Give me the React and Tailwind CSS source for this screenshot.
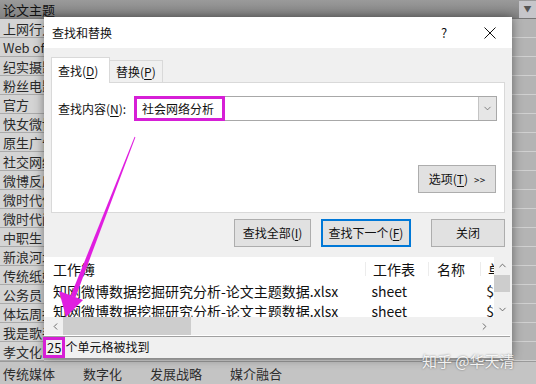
import { ChevronDown, ChevronLeft, ChevronRight, ChevronUp } from "lucide-react";

const leftCells = [
  "上网行为分析",
  "Web of Science",
  "纪实摄影作品",
  "粉丝电影研究",
  "官方",
  "快女微博",
  "原生广告",
  "社交网络分析",
  "微博反腐",
  "微时代传播",
  "微时代阅读",
  "中职生",
  "新浪河北",
  "传统纸媒",
  "公务员",
  "体坛周报",
  "我是歌手",
  "孝文化",
];

const bottomCells = [
  { text: "传统媒体", width: "w-[80px]" },
  { text: "数字化", width: "w-[67px]" },
  { text: "发展战略", width: "w-[80px]" },
  { text: "媒介融合", width: "flex-1" },
];

function Underlined({ before, letter, after = ")" }) {
  return (
    <span>
      {before}(<span className="underline underline-offset-2">{letter}</span>
      {after}
    </span>
  );
}

function DialogButton({ children, className = "" }) {
  return (
    <div
      className={`flex h-[28px] items-center justify-center bg-[#e1e1e1] text-[12px] text-[#111] ${className}`}
    >
      {children}
    </div>
  );
}

export default function App() {
  return (
    <div className="relative h-[384px] w-[536px] overflow-hidden bg-[#b8b8b8] font-['Noto_Sans_CJK_SC',sans-serif] text-[#222]">
      {/* worksheet behind the dialog */}
      <div className="flex flex-col">
        <div className="flex h-[19px] items-center bg-gradient-to-b from-[#9a9a9a] to-[#828282] border-b border-[#767676]">
          <span className="pl-[3px] text-[13px] leading-none text-[#111]">论文主题</span>
          <div className="ml-auto flex h-[17px] w-[17px] items-center justify-center bg-[#c6c6ca]">
            <span className="text-[8px] leading-none text-[#555]">▼</span>
          </div>
        </div>
        {leftCells.map((cell, i) => (
          <div key={i} className="flex h-[19px]">
            <div className="flex w-[44px] items-center overflow-hidden whitespace-nowrap border-b border-[#aaaaaa] bg-[#d4d4d4] pl-[3px] text-[13px] leading-none text-[#2a2a2a]">
              {cell}
            </div>
            <div className="flex-1 border-b border-[#d0d0d0] bg-[#b4b4b4]" />
          </div>
        ))}
        <div className="flex h-[23px] items-center border-t border-[#9a9a9a] bg-[#c4c4c4]">
          {bottomCells.map((cell) => (
            <div
              key={cell.text}
              className={`${cell.width} whitespace-nowrap pl-[3px] text-[13px] leading-none text-[#2c2c2c]`}
            >
              {cell.text}
            </div>
          ))}
        </div>
      </div>

      {/* find & replace dialog */}
      <div className="absolute left-[44px] top-[17px] flex h-[341px] w-[468px] flex-col bg-[#f0f0f0] shadow-[0_0_10px_rgba(0,0,0,0.45)]">
        <div className="flex h-[31px] shrink-0 items-center bg-white pl-[8px] pr-[16px] text-[12px] text-[#111]">
          <span>查找和替换</span>
          <span className="ml-auto w-[14px] text-center text-[13px]">?</span>
          <svg className="ml-[33px]" width="12" height="12" viewBox="0 0 12 12">
            <path d="M0.5 0.5 L11.5 11.5 M11.5 0.5 L0.5 11.5" stroke="#111" strokeWidth="1" fill="none" />
          </svg>
        </div>

        <div className="px-[7px] pt-[9px]">
          <div className="flex h-[25px] items-end text-[12px] text-[#111]">
            <div className="relative z-10 -mb-px flex h-[26px] w-[59px] items-center border border-b-0 border-[#d9d9d9] bg-white pl-[6px]">
              <Underlined before="查找" letter="D" />
            </div>
            <div className="flex h-[22px] w-[53px] items-center border border-b-0 border-l-0 border-[#d9d9d9] pl-[6px]">
              <Underlined before="替换" letter="P" />
            </div>
          </div>
          <div className="flex h-[131px] flex-col border border-[#d9d9d9] bg-white">
            <div className="mt-[13px] flex h-[25px] items-center">
              <span className="w-[82px] pl-[6px] text-[12px] text-[#111]">
                查找内容(<span className="underline underline-offset-2">N</span>):
              </span>
              <div className="mr-[7px] flex h-[25px] flex-1 border border-[#a8a8a8]">
                <span className="-m-px flex h-[25px] items-center border-[3px] border-[#d61fd6] pl-[5px] pr-[8px] text-[12px] text-[#111]">
                  社会网络分析
                </span>
                <div className="ml-auto flex w-[18px] items-center justify-center border-l border-[#c4c4c4] bg-[#e6e6e6]">
                  <ChevronDown size={11} strokeWidth={1.5} color="#555" />
                </div>
              </div>
            </div>
            <div className="mt-[44px] flex justify-end pr-[8px]">
              <DialogButton className="w-[78px] gap-[6px] border border-[#adadad]">
                <span>
                  选项(<span className="underline underline-offset-2">T</span>)
                </span>
                <span className="text-[10px]">&gt;&gt;</span>
              </DialogButton>
            </div>
          </div>
        </div>

        <div className="mt-[6px] flex justify-end gap-[10px] pr-[7px]">
          <DialogButton className="w-[77px] border border-[#adadad]">
            <Underlined before="查找全部" letter="I" />
          </DialogButton>
          <DialogButton className="w-[90px] border-2 border-[#0078d7]">
            <Underlined before="查找下一个" letter="F" />
          </DialogButton>
          <DialogButton className="ml-[10px] w-[74px] border border-[#adadad]">关闭</DialogButton>
        </div>

        {/* results list */}
        <div className="mr-[2px] mt-[10px] flex h-[80px] flex-col border-b border-[#a0a0a0] bg-white">
          <div className="flex h-[60px]">
            <div className="flex-1 overflow-hidden text-[14px] leading-none text-[#111]">
              <div className="flex h-[24px] items-center">
                <span className="w-[321px] pl-[9px]">工作簿</span>
                <span className="w-[63px] border-l border-[#ececec] pl-[7px]">工作表</span>
                <span className="w-[52px] border-l border-[#ececec] pl-[8px]">名称</span>
                <span className="flex-1 overflow-hidden border-l border-[#ececec] pl-[7px]">单</span>
              </div>
              {[0, 1].map((row) => (
                <div key={row} className="flex h-[20px] items-center whitespace-nowrap">
                  <span className="w-[321px] pl-[9px]">知网微博数据挖掘研究分析-论文主题数据.xlsx</span>
                  <span className="w-[63px] pl-[7px]">sheet</span>
                  <span className="w-[52px]" />
                  <span className="pl-[7px]">$</span>
                </div>
              ))}
            </div>
            <div className="flex w-[16px] flex-col items-center bg-[#f0f0f0]">
              <ChevronUp size={11} strokeWidth={2} color="#606060" className="mt-[3px]" />
              <div className="mt-[4px] h-[17px] w-[16px] bg-[#cdcdcd]" />
              <ChevronDown size={11} strokeWidth={2} color="#606060" className="mt-auto mb-[2px]" />
            </div>
          </div>
          <div className="flex h-[18px] items-center bg-[#f0f0f0]">
            <ChevronLeft size={11} strokeWidth={2} color="#606060" className="ml-[6px]" />
            <div className="ml-[2px] h-[18px] w-[128px] bg-[#cdcdcd]" />
            <ChevronRight size={11} strokeWidth={2} color="#606060" className="ml-auto mr-[20px]" />
          </div>
        </div>

        <div className="flex h-[20px] items-center text-[12px] leading-none text-[#111]">
          <span className="-ml-px flex h-[21px] items-center border-[3px] border-[#d61fd6] px-[1px] text-[13px]">
            25
          </span>
          <span>个单元格被找到</span>
        </div>
      </div>

      {/* annotation arrow */}
      <svg className="pointer-events-none absolute inset-0" width="536" height="384" viewBox="0 0 536 384">
        <polygon points="135.4,137.2 134.6,136.8 70.8,295.6 75.4,297.4" fill="#e01ee0" />
        <polygon points="66,317 59,291 83,300" fill="#e01ee0" />
      </svg>

      {/* watermark */}
      <div className="absolute left-[422px] top-[353px] whitespace-nowrap text-[15px] leading-none text-white/90 [text-shadow:0_0_2px_rgba(0,0,0,0.5)]">
        知乎 @华天清
      </div>
    </div>
  );
}
